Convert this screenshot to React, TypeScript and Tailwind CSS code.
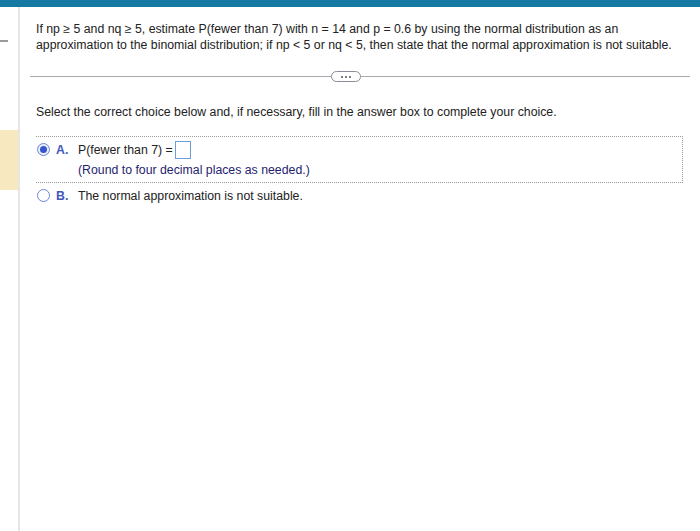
import React from "react";

export default function App() {
  return (
    <div className="w-[700px] h-[531px] bg-white flex flex-col overflow-hidden" style={{ fontFamily: '"Liberation Sans", Arial, sans-serif' }}>
      <div className="h-[7px] bg-[#147aa3] shrink-0" />
      <div className="flex flex-1">
        <div className="w-[20px] shrink-0 border-r-2 border-[#e6e6e6] flex flex-col">
          <div className="h-[33px]" />
          <div className="h-[2px] w-[8px] bg-[#9a9a9a]" />
          <div className="h-[88px]" />
          <div className="h-[60px] bg-[#f8e8bf]" />
        </div>
        <div className="flex-1 flex flex-col text-[12.3px] text-[#222] leading-[16px]">
          <div className="pl-[16px] pt-[14px] pr-[8px]">
            If np ≥ 5 and nq ≥ 5, estimate P(fewer than 7) with n = 14 and p = 0.6 by using the normal distribution as an approximation to the binomial distribution; if np &lt; 5 or nq &lt; 5, then state that the normal approximation is not suitable.
          </div>
          <div className="flex items-center pl-[10px] pr-[10px] mt-[18px]">
            <div className="w-[301px] h-px bg-[#a9a9b0]" />
            <div className="w-[30px] h-[11px] rounded-full border border-[#8c8c96] flex items-center justify-center gap-[2px]">
              <span className="w-[2px] h-[2px] bg-[#555] rounded-full" />
              <span className="w-[2px] h-[2px] bg-[#555] rounded-full" />
              <span className="w-[2px] h-[2px] bg-[#555] rounded-full" />
            </div>
            <div className="flex-1 h-px bg-[#a9a9b0]" />
          </div>
          <div className="pl-[16px] mt-[22px]">
            Select the correct choice below and, if necessary, fill in the answer box to complete your choice.
          </div>
          <div className="ml-[16px] mr-[17px] mt-[16px] border-t border-b border-r border-dotted border-[#9a9a9a] pt-[4px] pb-[4px] flex">
            <div className="w-[14px] flex justify-center pt-[2px]">
              <div className="w-[13px] h-[13px] rounded-full border border-[#6e86d8] bg-[#e9eefc] flex items-center justify-center">
                <div className="w-[7px] h-[7px] rounded-full bg-[#3656c9]" />
              </div>
            </div>
            <div className="w-[28px] pl-[6px] font-bold text-[#3f57bf] pt-[1px]">A.</div>
            <div className="flex flex-col">
              <div className="flex items-center">
                <span>P(fewer than 7) =</span>
                <span className="inline-block w-[16px] h-[18px] border border-[#6e9fd8] ml-[2px] bg-white" />
              </div>
              <div className="text-[#1f2470] mt-[3px]">(Round to four decimal places as needed.)</div>
            </div>
          </div>
          <div className="ml-[16px] mt-[5px] flex">
            <div className="w-[14px] flex justify-center pt-[1px]">
              <div className="w-[13px] h-[13px] rounded-full border border-[#6e86d8] bg-white" />
            </div>
            <div className="w-[28px] pl-[6px] font-bold text-[#3f57bf]">B.</div>
            <div>The normal approximation is not suitable.</div>
          </div>
        </div>
      </div>
    </div>
  );
}
